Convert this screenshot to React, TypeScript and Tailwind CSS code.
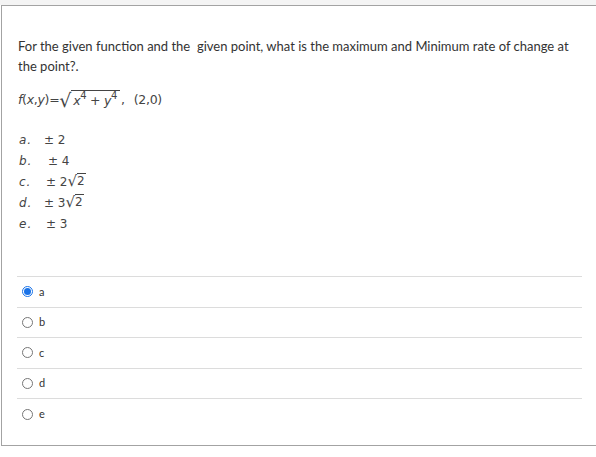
import React from "react";

const Sqrt = ({ children, big }: { children: React.ReactNode; big?: boolean }) => (
  <span className="inline-flex items-end">
    <span className={big ? "text-[19px] leading-none" : "text-[15px] leading-none"}>√</span>
    <span className={big ? "border-t border-[#444] leading-[19px] pr-[1px]" : "border-t border-[#444] leading-[15px] pr-[1px]"}>{children}</span>
  </span>
);

const options = [
  { l: "a.", v: <span className="ml-[1px]">± 2</span> },
  { l: "b.", v: <span className="ml-[5px]">± 4</span> },
  { l: "c.", v: <span className="ml-[3px]">± 2<Sqrt>2</Sqrt></span> },
  { l: "d.", v: <span className="ml-[1px]">± 3<Sqrt>2</Sqrt></span> },
  { l: "e.", v: <span className="ml-[3px]">± 3</span> },
];

export default function App() {
  const rows = ["a", "b", "c", "d", "e"];
  return (
    <div className="w-[596px] h-[457px] bg-white overflow-hidden">
      <div className="h-[5px] bg-[#f4f4f4]" />
      <div className="ml-[1px] w-[600px] border-l border-t border-b border-[#a3a3a3] pl-[15px] pr-[19px] pt-[31px] pb-[16px]">
        <p className="text-[13px] leading-[19.5px] text-[#333] [font-family:Lato,sans-serif] pl-[1px] pr-[12px]">
          For the given function and the &nbsp;given point, what is the maximum and Minimum rate of change at the point?.
        </p>
        <div className="mt-[12px] h-[24px] flex items-center text-[12.5px] text-[#444] [font-family:DejaVu_Sans,sans-serif] tracking-[-0.3px] pl-[1px]">
          <i>f</i>(<i>x</i>,<i>y</i>)=<Sqrt big><span className="px-[2px]"><i>x</i><sup className="text-[10px] -top-[6px]">4</sup> + <i>y</i><sup className="text-[10px] -top-[6px]">4</sup></span></Sqrt>
          <span className="ml-[1px]">,</span>
          <span className="ml-[9px]">(2,0)</span>
        </div>
        <div className="mt-[17px] pl-[2px] text-[12px] text-[#444] [font-family:DejaVu_Sans,sans-serif]">
          {options.map((o, i) => (
            <div key={i} className="h-[21px] flex items-center">
              <span className="italic w-[24px] tracking-[1px]">{o.l}</span>
              {o.v}
            </div>
          ))}
        </div>
        <div className="mt-[42px]">
          {rows.map((r, i) => (
            <div key={r} className="h-[30.6px] border-t border-[#dcdcdc] flex items-center pl-[5px] gap-[6px] [font-family:Lato,sans-serif] text-[11px] text-[#333]">
              {i === 0 ? (
                <span className="w-[11px] h-[11px] rounded-full border border-[#1a73e8] flex items-center justify-center">
                  <span className="w-[7px] h-[7px] rounded-full bg-[#1a73e8]" />
                </span>
              ) : (
                <span className="w-[11px] h-[11px] rounded-full border border-[#767676] bg-white" />
              )}
              <span>{r}</span>
            </div>
          ))}
        </div>
      </div>
    </div>
  );
}
